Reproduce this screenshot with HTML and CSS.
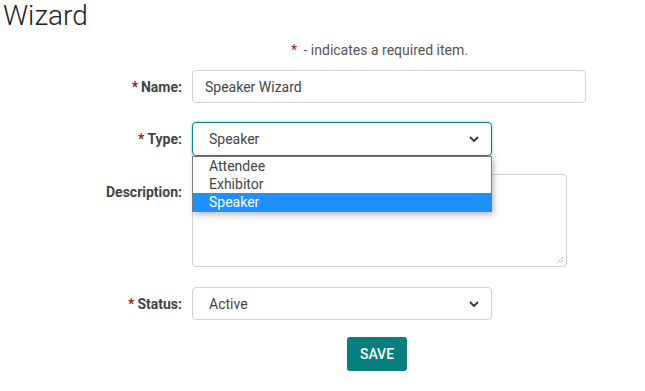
FILE: index.html
```html
<!DOCTYPE html>
<html>
<head>
<meta charset="utf-8">
<link rel="stylesheet" href="styles.css">
</head>
<body>
<h1 class="title">Wizard</h1>
<p class="note"><span class="req">*</span> - indicates a required item.</p>
<form class="form">
  <div class="row">
    <label class="label"><span class="req">*</span>Name:</label>
    <div class="field input">Speaker Wizard</div>
  </div>
  <div class="row type-row">
    <label class="label"><span class="req">*</span>Type:</label>
    <div class="select-wrap">
      <div class="field select focused">Speaker<svg class="chev" viewBox="0 0 10 6" width="10" height="6"><path d="M1 1l4 4 4-4" fill="none" stroke="#333" stroke-width="1.8"/></svg></div>
      <ul class="dropdown">
        <li>Attendee</li>
        <li>Exhibitor</li>
        <li class="sel">Speaker</li>
      </ul>
    </div>
  </div>
  <div class="row top">
    <label class="label desc">Description:</label>
    <div class="field textarea"><svg class="grip" viewBox="0 0 8 8" width="8" height="8"><path d="M7 1L1 7M7 4L4 7" stroke="#777" stroke-width="1" stroke-dasharray="1 1"/></svg></div>
  </div>
  <div class="row">
    <label class="label"><span class="req">*</span>Status:</label>
    <div class="field select">Active<svg class="chev" viewBox="0 0 10 6" width="10" height="6"><path d="M1 1l4 4 4-4" fill="none" stroke="#333" stroke-width="1.8"/></svg></div>
  </div>
  <div class="actions">
    <button type="button" class="save">SAVE</button>
  </div>
</form>
</body>
</html>
```
FILE: styles.css
```css
* { box-sizing: border-box; }
body {
  margin: 0;
  font-family: Roboto, "Liberation Sans", Arial, sans-serif;
  font-size: 14px;
  color: #444;
  background: #fff;
  width: 645px;
  height: 391px;
  overflow: hidden;
}
.title {
  margin: 0;
  padding: 0 0 0 3px;
  font-size: 28px;
  font-weight: 300;
  line-height: 31px;
  color: #222;
}
.note {
  margin: 9px 0 0 291px;
  line-height: 20px;
  font-size: 14px;
  color: #555;
}
.req {
  color: #8b1a1a;
  margin-right: 3px;
}
.form {
  display: flex;
  flex-direction: column;
  margin-top: 10px;
}
.row {
  display: flex;
  align-items: center;
  margin-bottom: 19px;
}
.row.type-row { margin-bottom: 18px; }
.row.top { align-items: flex-start; margin-bottom: 20px; }
.label {
  width: 182px;
  text-align: right;
  font-weight: 700;
  color: #444;
  margin-right: 10px;
  flex: none;
}
.label.desc { padding-top: 10px; }
.field {
  background: #fff;
  border: 1px solid #d2d2d2;
  border-radius: 4px;
  height: 33px;
  padding: 0 12px;
  display: flex;
  align-items: center;
  color: #444;
}
.input { width: 394px; }
.select-wrap { position: relative; }
.select {
  width: 300px;
  padding-left: 16px;
  justify-content: space-between;
}
.focused {
  border: 1px solid #167f7f;
  height: 34px;
  box-shadow: 0 0 2px 1px rgba(120, 200, 200, 0.5);
}
.dropdown {
  position: absolute;
  top: 34px;
  left: 0;
  width: 300px;
  margin: 0;
  padding: 0;
  list-style: none;
  background: #fff;
  border: 1px solid #7a7a7a;
  box-shadow: 2px 3px 6px rgba(0, 0, 0, 0.25);
  z-index: 5;
}
.dropdown li {
  height: 18px;
  line-height: 18px;
  padding-left: 16px;
  font-size: 14px;
  color: #444;
}
.dropdown li.sel {
  background: #1e90ff;
  color: #fff;
}
.textarea {
  width: 375px;
  height: 93px;
  position: relative;
}
.grip {
  position: absolute;
  right: 2px;
  bottom: 2px;
}
.actions {
  padding-left: 347px;
  margin-top: -2px;
}
.save {
  width: 60px;
  height: 34px;
  border: none;
  border-radius: 3px;
  background: #077f7f;
  color: #fff;
  font-family: Roboto, "Liberation Sans", Arial, sans-serif;
  font-size: 14px;
  font-weight: 500;
  padding: 0;
}
```
